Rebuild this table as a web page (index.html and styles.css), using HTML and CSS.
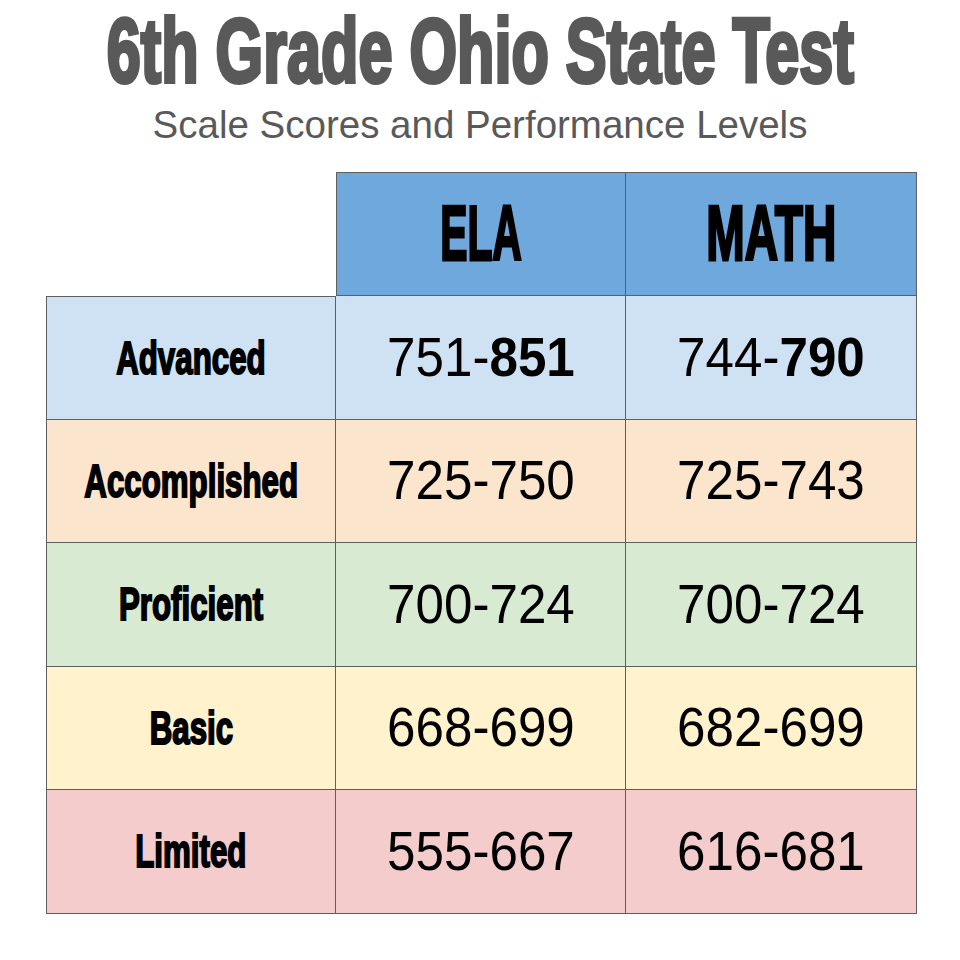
FILE: index.html
```html
<!DOCTYPE html>
<html lang="en">
<head>
<meta charset="utf-8">
<title>6th Grade Ohio State Test</title>
<link rel="stylesheet" href="styles.css">
</head>
<body>
<header class="top">
  <h1 class="title"><span class="title-text">6th Grade Ohio State Test</span></h1>
  <p class="subtitle">Scale Scores and Performance Levels</p>
</header>
<main class="grid">
  <div class="cell corner"></div>
  <div class="cell head head-first"><span class="head-text h-ela">ELA</span></div>
  <div class="cell head"><span class="head-text h-math">MATH</span></div>

  <div class="cell label row-adv label-first"><span class="label-text">Advanced</span></div>
  <div class="cell row-adv"><span class="num">751-<b>851</b></span></div>
  <div class="cell row-adv"><span class="num">744-<b>790</b></span></div>

  <div class="cell label row-acc"><span class="label-text">Accomplished</span></div>
  <div class="cell row-acc"><span class="num">725-750</span></div>
  <div class="cell row-acc"><span class="num">725-743</span></div>

  <div class="cell label row-pro"><span class="label-text">Proficient</span></div>
  <div class="cell row-pro"><span class="num">700-724</span></div>
  <div class="cell row-pro"><span class="num">700-724</span></div>

  <div class="cell label row-bas"><span class="label-text">Basic</span></div>
  <div class="cell row-bas"><span class="num">668-699</span></div>
  <div class="cell row-bas"><span class="num">682-699</span></div>

  <div class="cell label row-lim"><span class="label-text">Limited</span></div>
  <div class="cell row-lim"><span class="num">555-667</span></div>
  <div class="cell row-lim"><span class="num">616-681</span></div>
</main>
</body>
</html>
```
FILE: styles.css
```css
* { box-sizing: border-box; }
html, body { margin: 0; padding: 0; background: #ffffff; }
body {
  width: 960px;
  height: 960px;
  overflow: hidden;
  font-family: "Liberation Sans", Arial, sans-serif;
  color: #000;
}
.top {
  padding-top: 6px;
  display: flex;
  flex-direction: column;
  align-items: center;
}
.title {
  margin: 0;
  width: 960px;
  display: flex;
  justify-content: center;
  font-size: 90px;
  line-height: 90px;
  font-weight: 700;
  color: #595959;
  white-space: nowrap;
}
.title-text {
  display: inline-block;
  flex-shrink: 0;
  transform: scaleX(0.68);
  -webkit-text-stroke: 4px #595959;
}
.subtitle {
  margin: 10px 0 0;
  font-size: 38.5px;
  line-height: 38.5px;
  color: #595959;
  white-space: nowrap;
}
.grid {
  margin: 27px 0 0 46px;
  display: grid;
  grid-template-columns: 290px 290px 291px;
  grid-template-rows: 124px 124px 123px 124px 123px 124px;
}
.cell {
  display: flex;
  align-items: center;
  justify-content: center;
  border-right: 1px solid #5f5f5f;
  border-bottom: 1px solid #5f5f5f;
  white-space: nowrap;
  overflow: visible;
}
.corner { border: none; }
.head { background: #6fa8dc; border-top: 1px solid #5f5f5f; }
.head-first { border-left: 1px solid #5f5f5f; }
.label { border-left: 1px solid #5f5f5f; }
.label-first { border-top: 1px solid #5f5f5f; }
.row-adv { background: #cfe2f3; }
.row-acc { background: #fce5cd; }
.row-pro { background: #d9ead3; }
.row-bas { background: #fff2cc; }
.row-lim { background: #f4cccc; }

.head-text {
  display: inline-block;
  flex-shrink: 0;
  font-size: 77px;
  line-height: 77px;
  font-weight: 700;
  color: #000;
  -webkit-text-stroke: 3px #000;
}
.h-ela { transform: scaleX(0.53); }
.h-math { transform: scaleX(0.6); }

.label-text {
  display: inline-block;
  flex-shrink: 0;
  font-size: 46px;
  line-height: 46px;
  font-weight: 700;
  color: #000;
  transform: scaleX(0.68);
  -webkit-text-stroke: 2px #000;
}
.num {
  display: inline-block;
  flex-shrink: 0;
  font-size: 55px;
  line-height: 55px;
  font-weight: 400;
  color: #000;
  transform: scaleX(0.93);
}
.num b { font-weight: 700; }
```
